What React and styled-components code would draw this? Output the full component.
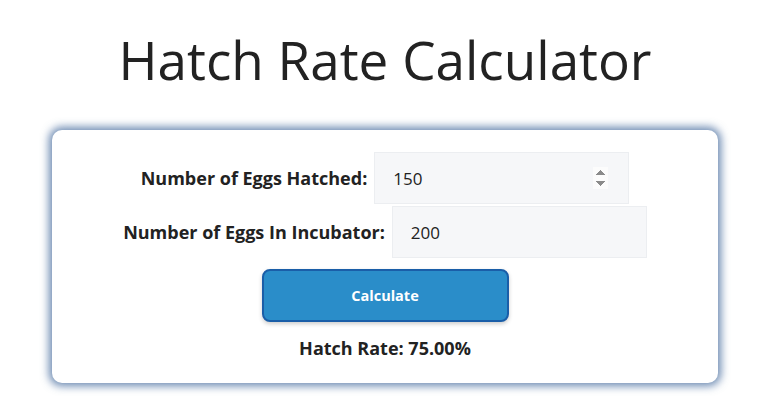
import React, { useState } from 'react'
import styled, { createGlobalStyle } from 'styled-components'

const GlobalStyle = createGlobalStyle`
  body {
    margin: 0;
    background: #fff;
    font-family: "Open Sans", "Noto Sans", sans-serif;
    color: #222;
  }
`

const Page = styled.main`
  display: flex;
  flex-direction: column;
  align-items: center;
  padding: 16px 11px 20px 0;
`

const Heading = styled.h1`
  margin: 0 0 26px;
  font-size: 53px;
  font-weight: 400;
  color: #222;
  line-height: 88px;
`

const Card = styled.section`
  width: 666px;
  box-sizing: border-box;
  background: #fff;
  border-radius: 10px;
  box-shadow: 0 0 9px 3px rgba(70, 108, 158, 0.8);
  padding: 22px 0 23px;
  display: flex;
  flex-direction: column;
  align-items: center;
`

const Row = styled.div`
  display: flex;
  align-items: center;
  gap: 7px;
  margin-bottom: 2px;
`

const Label = styled.label`
  font-weight: 700;
  font-size: 18px;
`

const Input = styled.input`
  width: 255px;
  height: 52px;
  box-sizing: border-box;
  border: 1px solid #eceef1;
  background: #f6f7f9;
  padding: 0 18px;
  font-family: inherit;
  font-size: 17px;
  color: #222;
  outline: none;
  &::-webkit-inner-spin-button {
    opacity: ${p => (p.$spin ? 1 : 0)};
    margin-right: 2px;
  }
`

const Button = styled.button`
  margin-top: 9px;
  width: 247px;
  height: 53px;
  border-radius: 8px;
  border: 2px solid #1a5ea8;
  background: #2a8dc9;
  color: #fff;
  font-family: inherit;
  font-weight: 700;
  font-size: 14.5px;
  box-shadow: 0 2px 4px rgba(0, 0, 0, 0.2);
  cursor: pointer;
`

const Result = styled.p`
  margin: 14px 0 0;
  font-weight: 700;
  font-size: 18px;
`

function App () {
  const [hatched, setHatched] = useState('150')
  const [total, setTotal] = useState('200')
  const [rate, setRate] = useState('75.00')

  function handleCalculate () {
    const h = parseFloat(hatched)
    const t = parseFloat(total)
    if (t > 0) setRate(((h / t) * 100).toFixed(2))
  }

  return (
    <Page>
      <GlobalStyle />
      <Heading>Hatch Rate Calculator</Heading>
      <Card>
        <Row>
          <Label>Number of Eggs Hatched:</Label>
          <Input $spin type='number' value={hatched} onChange={e => setHatched(e.target.value)} />
        </Row>
        <Row>
          <Label>Number of Eggs In Incubator:</Label>
          <Input type='number' value={total} onChange={e => setTotal(e.target.value)} />
        </Row>
        <Button onClick={handleCalculate}>Calculate</Button>
        <Result>Hatch Rate: {rate}%</Result>
      </Card>
    </Page>
  )
}

export default App
